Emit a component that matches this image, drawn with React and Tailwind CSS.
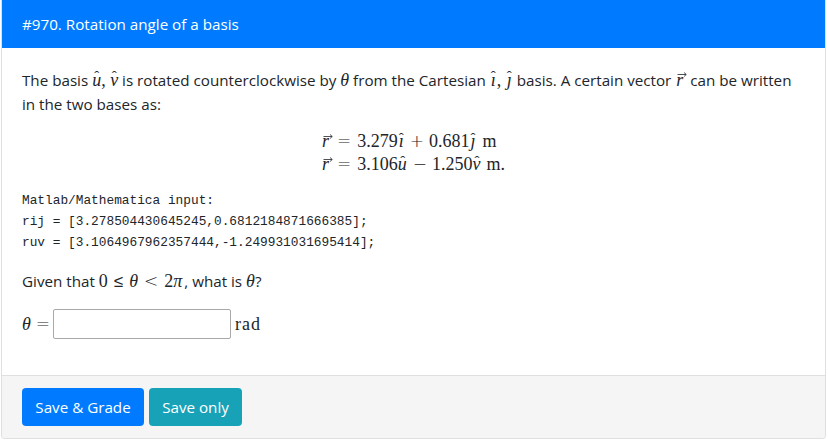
function I({ children, className = "" }) {
  return <span className={`italic ${className}`}>{children}</span>;
}

function Hat({ children, className = "" }) {
  return (
    <span className={`relative inline-block italic ${className}`}>
      {children}
      <span className="absolute left-0 right-0 top-[1px] text-center not-italic text-[15px] leading-[15px]">ˆ</span>
    </span>
  );
}

function Vec({ className = "" }) {
  return (
    <span className={`relative inline-block italic pr-[2px] ${className}`}>
      r
      <svg className="absolute left-[1px] top-[3px]" width="10" height="7" viewBox="0 0 10 7" fill="none" stroke="currentColor" strokeWidth="0.8">
        <path d="M0.5 3.5H9M7 1.5L9.3 3.5L7 5.5" />
      </svg>
    </span>
  );
}

function Op({ children, className = "mx-[6px]" }) {
  return (
    <span className={`font-['DejaVu_Sans',sans-serif] font-extralight text-[17px] ${className}`}>{children}</span>
  );
}

function M({ children, className = "" }) {
  return (
    <span className={`font-['Liberation_Serif',serif] text-[18px] ${className}`}>{children}</span>
  );
}

export default function App() {
  return (
    <div className="w-[828px] h-[443px] bg-white pl-[1px] pr-[2px] font-['Open_Sans',sans-serif] text-[15.2px] leading-[24px] text-[#212529]">
      <div className="w-[825px] h-[439px] flex flex-col border border-t-0 border-[#dfdfdf] rounded-b-[4px] overflow-hidden">
        <div className="h-[48px] shrink-0 bg-[#007bff] text-white flex items-center px-[20px]">
          #970. Rotation angle of a basis
        </div>
        <div className="flex-1 bg-white px-[20px] pt-[20px]">
          <p className="whitespace-nowrap">
            The basis <M><Hat>u</Hat>, <Hat>v</Hat></M> is rotated counterclockwise by <M><I>θ</I></M> from the Cartesian <M><Hat className="px-[1px]">ı</Hat>, <Hat className="px-[1px]">ȷ</Hat></M> basis. A certain vector <M><Vec className="mx-[1px]" /></M> can be written
          </p>
          <p>in the two bases as:</p>
          <div className="mt-[14px] flex flex-col items-center text-[18px] leading-[23px] font-['Liberation_Serif',serif]">
            <div className="flex flex-col items-start">
              <div className="whitespace-nowrap"><Vec /><Op>=</Op>3.279<Hat className="px-[1px]">ı</Hat><Op className="mx-[5px]">+</Op>0.681<Hat className="px-[1px]">ȷ</Hat><span className="ml-[6px]">m</span></div>
              <div className="whitespace-nowrap"><Vec /><Op>=</Op>3.106<Hat className="pr-[1px]">u</Hat><Op className="mx-[5px]">−</Op>1.250<Hat className="pr-[1px]">v</Hat><span className="ml-[5px]">m.</span></div>
            </div>
          </div>
          <pre className="mt-[14px] font-['Liberation_Mono',monospace] text-[12.8px] leading-[21px] text-[#212529]">
{`Matlab/Mathematica input:
rij = [3.278504430645245,0.6812184871666385];
ruv = [3.1064967962357444,-1.249931031695414];`}
          </pre>
          <p className="mt-[16px] whitespace-nowrap">
            Given that <M>0<Op className="mx-[6px]">≤</Op><I>θ</I><Op className="mx-[6px]">&lt;</Op>2<I className="pr-[2px]">π</I></M>, what is <M><I>θ</I></M>?
          </p>
          <div className="mt-[15px] flex items-center h-[32px]">
            <M><I>θ</I><Op className="ml-[5px]">=</Op></M>
            <input className="ml-[3px] w-[178px] h-[30px] border border-[#a9a9a9] rounded-[2px] bg-white outline-none" />
            <M className="ml-[4px] tracking-[0.9px]">rad</M>
          </div>
        </div>
        <div className="h-[63px] shrink-0 bg-[#f5f5f5] border-t border-[#dfdfdf] px-[20px] pt-[12px] flex gap-[5px] items-start">
          <button className="h-[38px] w-[122px] rounded-[4px] bg-[#007bff] text-white text-center">Save &amp; Grade</button>
          <button className="h-[38px] w-[93px] rounded-[4px] bg-[#17a2b8] text-white text-center">Save only</button>
        </div>
      </div>
    </div>
  );
}
